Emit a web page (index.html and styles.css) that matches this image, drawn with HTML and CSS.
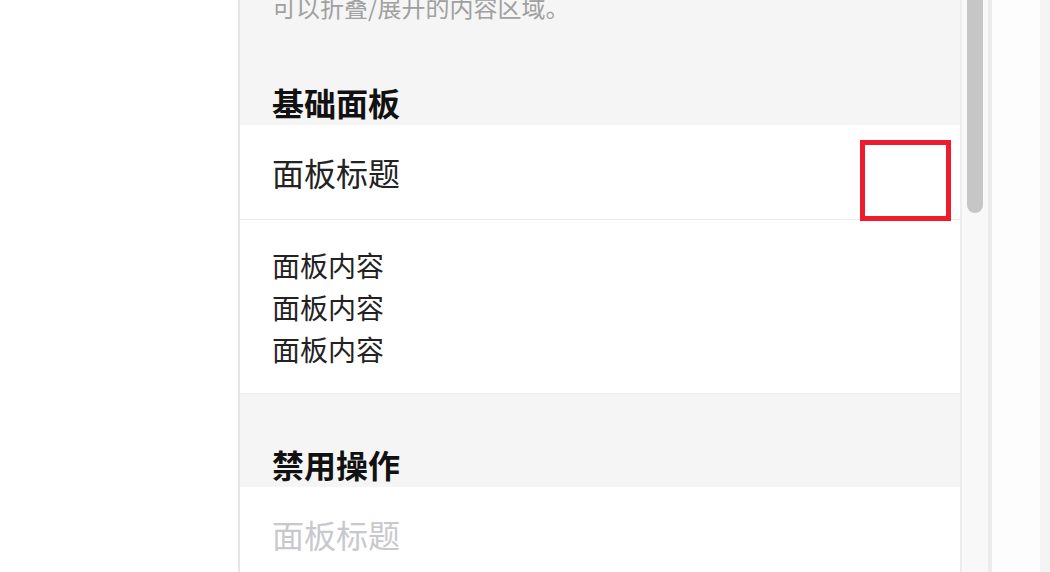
FILE: index.html
```html
<!DOCTYPE html>
<html lang="zh-CN">
<head>
    <meta charset="UTF-8">
    <meta name="viewport" content="width=device-width, initial-scale=1.0">
    <title>Collapse 折叠面板</title>
    <link rel="stylesheet" href="styles.css">
</head>
<body>
    <div class="stage">
        <div class="device">
            <div class="viewport">
                <div class="page">
                    <p class="intro">可以折叠/展开的内容区域。</p>

                    <h2 class="demo-title">基础面板</h2>
                    <div class="panel">
                        <div class="panel-head">
                            <span>面板标题</span>
                            <span class="arrow-box"></span>
                        </div>
                        <div class="panel-body">
                            <div>面板内容</div>
                            <div>面板内容</div>
                            <div>面板内容</div>
                        </div>
                    </div>

                    <h2 class="demo-title gap">禁用操作</h2>
                    <div class="panel">
                        <div class="panel-head disabled">
                            <span>面板标题</span>
                        </div>
                    </div>
                </div>
            </div>
            <div class="scrollbar">
                <div class="thumb"></div>
            </div>
        </div>
        <div class="side"></div>
        <div class="edge"></div>
    </div>
</body>
</html>
```

FILE: styles.css
```css
html, body { margin: 0; height: 100%; background: #fff; }
body { font-family: "Noto Sans CJK SC", "Noto Sans", sans-serif; overflow: hidden; }

.stage { display: flex; height: 572px; padding-left: 238px; }
.device { display: flex; border-left: 2px solid #e6e6e6; border-right: 4px solid #ececec; }
.viewport { width: 720px; height: 572px; overflow: hidden; background: #f5f5f5; border-right: 2px solid #ececec; }
.page { margin-top: -11px; }

.intro { margin: 0; padding: 0 32px; font-size: 24px; line-height: 36px; color: #a0a0a0; }
.demo-title { margin: 0; padding: 54px 32px 0; font-size: 32px; line-height: 46px; font-weight: bold; color: #111; }
.demo-title.gap { padding-top: 47px; }

.panel { background: #fff; }
.panel-head { position: relative; display: flex; align-items: center; padding: 24px 32px; font-size: 32px; line-height: 46px; color: #222; border-bottom: 1px solid #ebebeb; }
.panel-head.disabled { color: #c8c9cc; border-bottom: none; }
.arrow-box { position: absolute; right: 9px; top: 15px; width: 91px; height: 81px; box-sizing: border-box; border: 5px solid #ef1d2c; }
.panel-body { padding: 24px 32px 23px; font-size: 28px; line-height: 42px; color: #222; border-bottom: 1px solid #ebebeb; }

.scrollbar { width: 26px; background: #f8f8f8; display: flex; justify-content: center; }
.thumb { width: 16px; height: 213px; background: #c6c6c6; border-radius: 0 0 8px 8px; }

.side { width: 48px; background: #fdfdfd; }
.edge { flex: 1; background: #f4f4f4; }
```
